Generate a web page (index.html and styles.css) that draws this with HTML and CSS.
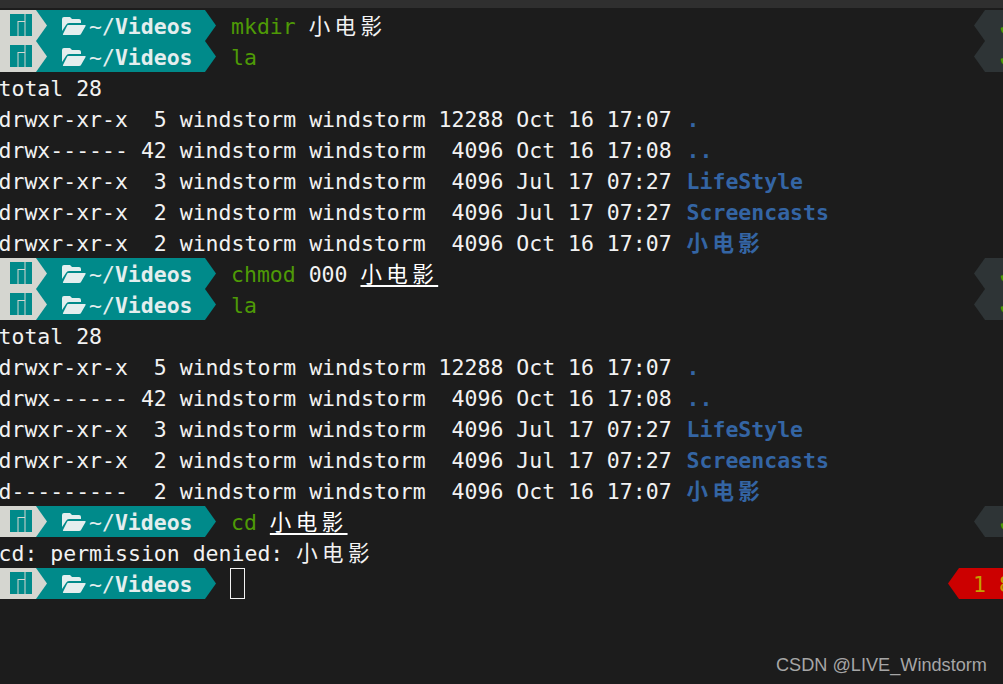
FILE: index.html
```html
<!DOCTYPE html>
<html lang="en">
<head>
<meta charset="utf-8">
<title>Terminal</title>
<link rel="stylesheet" href="styles.css">
</head>
<body>
<svg class="defs" width="0" height="0" aria-hidden="true">
  <symbol id="manjaro" viewBox="0 0 22 22">
    <path d="M0 0H14.5V7H7.5V22H0Z M8.5 8H14.5V22H8.5Z M15.5 0H22V22H15.5Z"/>
  </symbol>
  <symbol id="folder" viewBox="0 0 24 18">
    <path d="M0 2Q0 0 2 0H8L10 2H17Q19 2 19 4V6H7Q5 6 4 8L0 14Z"/>
    <path d="M6 8H23Q24 8 23.6 9L19 17Q18.6 18 17 18H1.500Q0.500 18 1 17L5 9Q5.500 8 6 8Z"/>
  </symbol>
</svg>
<div class="titlebar"></div>
<main class="terminal">
  <div class="row prompt-row">
    <div class="prompt"><span class="seg-logo"><svg class="logo"><use href="#manjaro"/></svg></span><span class="seg-path"><svg class="folder"><use href="#folder"/></svg><span class="path">~/<b>Videos</b></span></span></div>
    <span class="cmd"><span class="green">mkdir</span> <span class="cjk">小电影</span></span>
    <span class="rstatus ok">✔</span>
  </div>
  <div class="row prompt-row">
    <div class="prompt"><span class="seg-logo"><svg class="logo"><use href="#manjaro"/></svg></span><span class="seg-path"><svg class="folder"><use href="#folder"/></svg><span class="path">~/<b>Videos</b></span></span></div>
    <span class="cmd"><span class="green">la</span></span>
    <span class="rstatus ok">✔</span>
  </div>
  <div class="row out">total 28</div>
  <div class="row out">drwxr-xr-x  5 windstorm windstorm 12288 Oct 16 17:07 <b class="dir">.</b></div>
  <div class="row out">drwx------ 42 windstorm windstorm  4096 Oct 16 17:08 <b class="dir">..</b></div>
  <div class="row out">drwxr-xr-x  3 windstorm windstorm  4096 Jul 17 07:27 <b class="dir">LifeStyle</b></div>
  <div class="row out">drwxr-xr-x  2 windstorm windstorm  4096 Jul 17 07:27 <b class="dir">Screencasts</b></div>
  <div class="row out">drwxr-xr-x  2 windstorm windstorm  4096 Oct 16 17:07 <b class="dir cjk">小电影</b></div>
  <div class="row prompt-row">
    <div class="prompt"><span class="seg-logo"><svg class="logo"><use href="#manjaro"/></svg></span><span class="seg-path"><svg class="folder"><use href="#folder"/></svg><span class="path">~/<b>Videos</b></span></span></div>
    <span class="cmd"><span class="green">chmod</span> 000 <span class="cjk under">小电影</span></span>
    <span class="rstatus ok">✔</span>
  </div>
  <div class="row prompt-row">
    <div class="prompt"><span class="seg-logo"><svg class="logo"><use href="#manjaro"/></svg></span><span class="seg-path"><svg class="folder"><use href="#folder"/></svg><span class="path">~/<b>Videos</b></span></span></div>
    <span class="cmd"><span class="green">la</span></span>
    <span class="rstatus ok">✔</span>
  </div>
  <div class="row out">total 28</div>
  <div class="row out">drwxr-xr-x  5 windstorm windstorm 12288 Oct 16 17:07 <b class="dir">.</b></div>
  <div class="row out">drwx------ 42 windstorm windstorm  4096 Oct 16 17:08 <b class="dir">..</b></div>
  <div class="row out">drwxr-xr-x  3 windstorm windstorm  4096 Jul 17 07:27 <b class="dir">LifeStyle</b></div>
  <div class="row out">drwxr-xr-x  2 windstorm windstorm  4096 Jul 17 07:27 <b class="dir">Screencasts</b></div>
  <div class="row out">d---------  2 windstorm windstorm  4096 Oct 16 17:07 <b class="dir cjk">小电影</b></div>
  <div class="row prompt-row">
    <div class="prompt"><span class="seg-logo"><svg class="logo"><use href="#manjaro"/></svg></span><span class="seg-path"><svg class="folder"><use href="#folder"/></svg><span class="path">~/<b>Videos</b></span></span></div>
    <span class="cmd"><span class="green">cd</span> <span class="cjk under">小电影</span></span>
    <span class="rstatus ok">✔</span>
  </div>
  <div class="row out">cd: permission denied: <span class="cjk">小电影</span></div>
  <div class="row prompt-row">
    <div class="prompt"><span class="seg-logo"><svg class="logo"><use href="#manjaro"/></svg></span><span class="seg-path"><svg class="folder"><use href="#folder"/></svg><span class="path">~/<b>Videos</b></span></span></div>
    <span class="cursor"></span>
    <span class="rstatus err">1 8</span>
  </div>
</main>
<div class="watermark">CSDN @LIVE_Windstorm</div>
</body>
</html>
```

FILE: styles.css
```css
html, body {
  margin: 0;
  height: 100%;
}
body {
  width: 1003px;
  height: 684px;
  overflow: hidden;
  position: relative;
  background: #1c1c1c;
  color: #f2f2f2;
  font-family: "DejaVu Sans Mono", "Noto Sans CJK SC", monospace;
  font-size: 21.5px;
  line-height: 33px;
}
.defs {
  position: absolute;
}
.titlebar {
  height: 8px;
  background: #2f2f2f;
}
.terminal {
  padding-top: 2px;
}
.row {
  height: 31px;
  white-space: pre;
  overflow: hidden;
}
.out {
  margin-left: -1.500px;
}
.prompt-row {
  display: flex;
  align-items: flex-start;
}
.prompt {
  display: flex;
  flex: none;
  width: 231px;
  height: 31px;
}
.seg-logo {
  position: relative;
  z-index: 1;
  flex: none;
  box-sizing: border-box;
  width: 47px;
  height: 31px;
  padding: 4px 0 0 10px;
  background: #d5d6d0;
  clip-path: polygon(0 0, 36px 0, 47px 50%, 36px 100%, 0 100%);
}
.logo {
  display: block;
  width: 22px;
  height: 22px;
  fill: #008a8a;
}
.seg-path {
  display: flex;
  align-items: flex-start;
  flex: none;
  box-sizing: border-box;
  width: 180px;
  height: 31px;
  margin-left: -11px;
  padding-left: 26px;
  background: #008a8a;
  color: #e4eeee;
  clip-path: polygon(0 0, 169px 0, 180px 50%, 169px 100%, 0 100%);
}
.folder {
  flex: none;
  width: 24px;
  height: 18px;
  margin: 7px 3px 0 0;
  fill: #e4eeee;
}
.cmd {
  flex: none;
}
.green {
  color: #4e9a06;
}
.dir {
  display: inline-block;
  margin-left: 2px;
  color: #3465a4;
}
.cjk {
  font-family: "Noto Sans CJK SC", sans-serif;
  letter-spacing: 4.4px;
  line-height: 1;
}
.under {
  text-decoration: underline;
  text-decoration-thickness: 2px;
  text-underline-offset: 3px;
  color: #ffffff;
}
.cursor {
  flex: none;
  box-sizing: border-box;
  width: 15px;
  height: 31px;
  margin: 0 0 0 -1px;
  border: 1px solid #f2f2f2;
}
.rstatus {
  flex: none;
  box-sizing: border-box;
  margin-left: auto;
  height: 31px;
  overflow: hidden;
}
.ok {
  width: 29px;
  padding-left: 26px;
  background: #2e3436;
  color: #4e9a06;
  clip-path: polygon(0 50%, 11px 0, 100% 0, 100% 100%, 11px 100%);
}
.err {
  width: 55px;
  padding-left: 25px;
  background: #cc0000;
  color: #c4a000;
  clip-path: polygon(0 50%, 11px 0, 100% 0, 100% 100%, 11px 100%);
}
.watermark {
  position: absolute;
  left: 776px;
  top: 653px;
  font-family: "Liberation Sans", Arial, sans-serif;
  font-size: 18.150px;
  line-height: 24px;
  color: #a6a6a6;
}
```
